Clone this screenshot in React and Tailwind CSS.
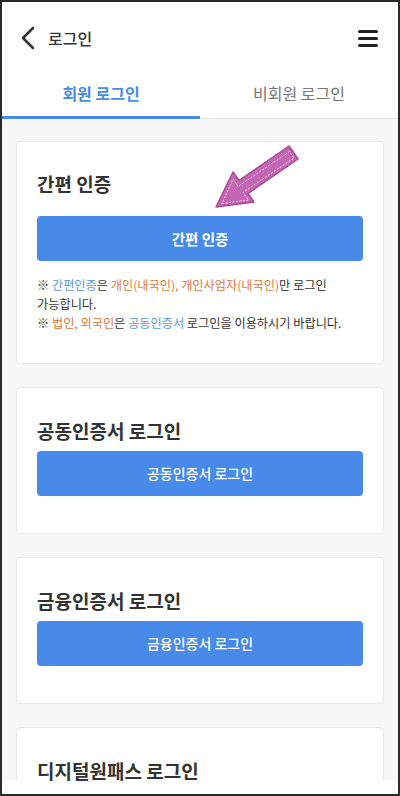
import React from 'react';

const FONT = { fontFamily: '"Noto Sans CJK KR", "Noto Sans", sans-serif' };

const LoginCard = ({ title, button }) => (
  <div className="bg-white border border-[#ebe9e9] rounded-[4px] px-5 pt-[29px] pb-[37px]">
    <h3 className="text-[19px] leading-[28px] font-bold text-[#333]">{title}</h3>
    <button className="mt-[6px] w-full h-[45px] rounded-[4px] bg-[#478ae9] text-white text-[14px] font-medium">
      {button}
    </button>
  </div>
);

const App = () => {
  return (
    <div style={FONT} className="w-[400px] h-[796px] border-2 border-[#2b2b2b] bg-white overflow-hidden flex flex-col">
      {/* Header */}
      <div className="h-[72px] shrink-0 flex items-center justify-between pl-[18px] pr-[20px]">
        <div className="flex items-center gap-[12px]">
          <svg width="16" height="24" viewBox="0 0 16 24" fill="none">
            <polyline points="13,2 3,12 13,22" stroke="#333" strokeWidth="2.6" strokeLinecap="round" strokeLinejoin="round" />
          </svg>
          <span className="text-[16px] font-medium text-[#333]">로그인</span>
        </div>
        <div className="flex flex-col gap-[4px] w-[20px]">
          <span className="h-[3px] bg-[#222] rounded-sm" />
          <span className="h-[3px] bg-[#222] rounded-sm" />
          <span className="h-[3px] bg-[#222] rounded-sm" />
        </div>
      </div>

      {/* Tabs */}
      <div className="shrink-0 flex border-b border-[#e2e2e2]">
        <div className="w-1/2 h-[45px] flex items-start justify-center pt-[7px] border-b-[3px] border-[#478ae9] -mb-px">
          <span className="text-[16px] font-bold text-[#478ae9]">회원 로그인</span>
        </div>
        <div className="w-1/2 h-[44px] flex items-start justify-center pt-[7px]">
          <span className="text-[16px] text-[#777]">비회원 로그인</span>
        </div>
      </div>

      {/* Body */}
      <div className="flex-1 bg-[#f8f7f7] px-[14px] pt-[22px] flex flex-col gap-[23px] overflow-hidden">
        <div className="relative bg-white border border-[#ebe9e9] rounded-[4px] px-5 pt-[28px] pb-[30px]">
          <svg className="absolute left-[192px] top-[1px]" width="96" height="72" viewBox="0 0 96 72">
            <polygon
              points="7,64 45,59 39,50.5 89,16 80,3 30,37.5 24,29"
              fill="#c566b5"
              stroke="#a8489a"
              strokeWidth="1.5"
              strokeLinejoin="round"
            />
            <polygon
              points="13,60.5 39.5,57 34,49.5 85,15 80.5,8.5 29,43.5 24,36"
              fill="none"
              stroke="#f6dcef"
              strokeWidth="1"
              strokeDasharray="2 1.5"
            />
          </svg>
          <h3 className="text-[19px] leading-[28px] font-bold text-[#333]">간편 인증</h3>
          <button className="mt-[18px] w-full h-[45px] rounded-[4px] bg-[#478ae9] text-white text-[14.5px] font-bold">
            간편 인증
          </button>
          <div className="mt-[15px] text-[12.2px] leading-[19px] text-[#333]">
            <p>
              ※ <span className="text-[#5b9be0]">간편인증</span>은{' '}
              <span className="text-[#e07a3c]">개인(내국인), 개인사업자(내국인)</span>만 로그인
              <br />
              가능합니다.
            </p>
            <p>
              ※ <span className="text-[#e07a3c]">법인, 외국인</span>은{' '}
              <span className="text-[#5b9be0]">공동인증서</span> 로그인을 이용하시기 바랍니다.
            </p>
          </div>
        </div>

        <LoginCard title="공동인증서 로그인" button="공동인증서 로그인" />
        <LoginCard title="금융인증서 로그인" button="금융인증서 로그인" />
        <LoginCard title="디지털원패스 로그인" button="디지털원패스 로그인" />
      </div>
      <div className="h-[13px] shrink-0 bg-white" />
    </div>
  );
};

export default App;
